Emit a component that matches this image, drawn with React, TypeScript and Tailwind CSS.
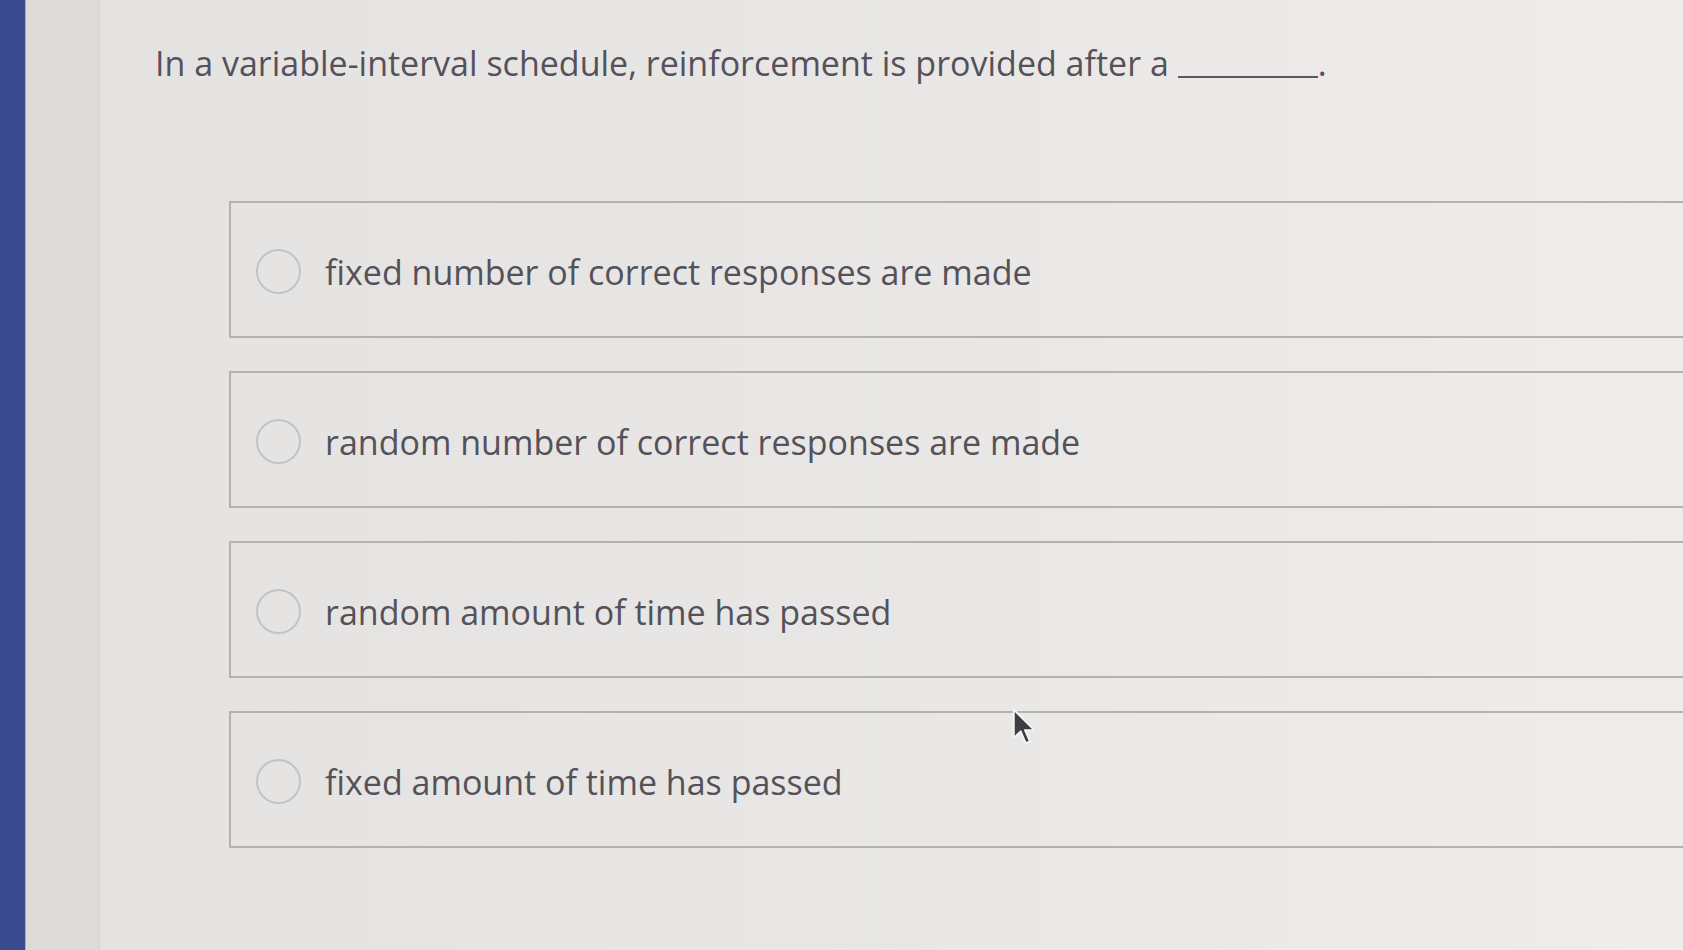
const options = [
  "fixed number of correct responses are made",
  "random number of correct responses are made",
  "random amount of time has passed",
  "fixed amount of time has passed",
];

const Cursor = () => (
  <svg width="28" height="40" viewBox="0 0 22 32" className="absolute left-[1011px] top-[707px]">
    <path
      d="M2 2 L2 25 L7.5 19.5 L11.5 29 L15 27.5 L11 18.5 L18.5 18.5 Z"
      fill="#3f3d44"
      stroke="#f4f4f4"
      strokeWidth="1.6"
      strokeLinejoin="round"
    />
  </svg>
);

const Option = ({ label }: { label: string }) => (
  <label className="flex items-center h-[137px] border-2 border-r-0 border-[#b3b2b1] pl-[25px] pt-[4px] cursor-pointer">
    <span className="w-[45px] h-[45px] rounded-full border-2 border-[#c4c3c3] shrink-0" />
    <span className="ml-[24px] text-[34px] leading-[48px] text-[#55515a]">{label}</span>
  </label>
);

export default function App() {
  return (
    <div
      className="relative flex w-[1683px] h-[950px] overflow-hidden"
      style={{ fontFamily: '"Open Sans", "Noto Sans", sans-serif' }}
    >
      <div className="w-[26px] bg-[#3c4a90] border-r border-[#c9a7a4]" />
      <div className="w-[74px] bg-[#dddbd8] border-r border-[#d4d2cf]" />
      <main className="flex-1 bg-gradient-to-r from-[#e4e3e1] via-[#e8e7e5] to-[#eeedeb] pl-[55px] pt-[39px]">
        <p className="text-[34px] leading-[48px] text-[#55515a] whitespace-nowrap">
          In a variable-interval schedule, reinforcement is provided after a{" "}
          <span className="inline-block w-[140px] border-b-2 border-[#5a5660] align-baseline translate-y-[2px]" />
          .
        </p>
        <div className="ml-[74px] mt-[114px] flex flex-col gap-[33px]">
          {options.map((o) => (
            <Option key={o} label={o} />
          ))}
        </div>
      </main>
      <Cursor />
    </div>
  );
}
